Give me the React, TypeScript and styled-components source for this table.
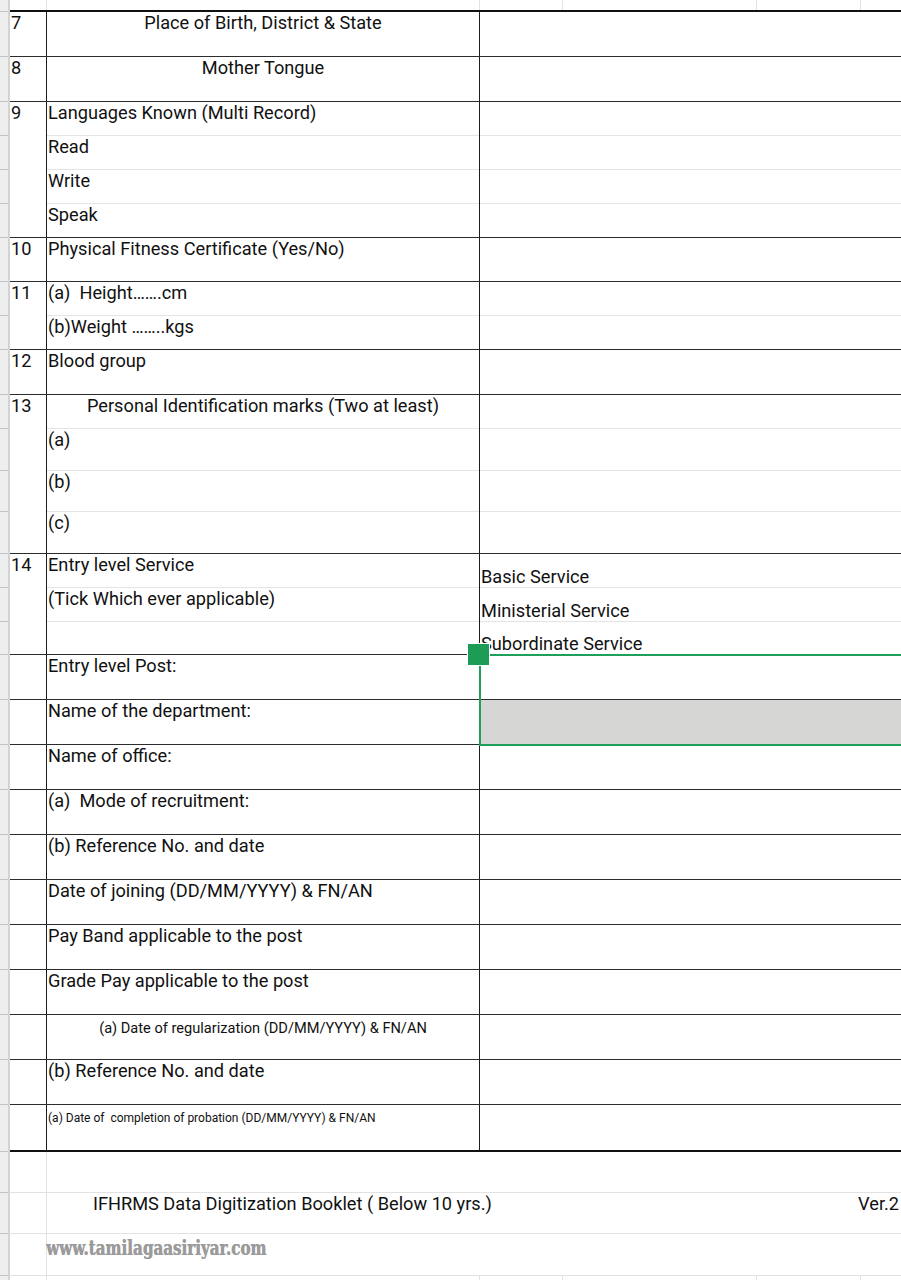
import React from 'react';
import styled, { createGlobalStyle } from 'styled-components';

const GlobalStyle = createGlobalStyle`
  html, body { margin: 0; padding: 0; background: #ffffff; }
  body { font-family: Roboto, "Noto Sans", Arial, sans-serif; color: #111111; }
  *, *::before, *::after { box-sizing: border-box; }
`;

type Rule = 'dark' | 'thick' | 'light' | 'none';
type Line = 'dark' | 'light' | 'none';

const ruleCss: Record<Rule, string> = {
  dark: '1px solid #2c2c2c',
  thick: '2px solid #111111',
  light: '1px solid #e2e2e2',
  none: 'none',
};
const ruleWidth: Record<Rule, number> = { dark: 1, thick: 2, light: 1, none: 0 };
const lineCss: Record<Line, string> = {
  dark: '1px solid #1c1c1c',
  light: '1px solid #e2e2e2',
  none: '1px solid transparent',
};

const Sheet = styled.div`
  width: 901px;
  height: 1280px;
  overflow: hidden;
  display: flex;
  flex-direction: column;
  background: #ffffff;
`;

const Block = styled.div`
  display: flex;
  flex: none;
`;

const GutterCol = styled.div`
  width: 10px;
  flex: none;
  display: flex;
  flex-direction: column;
  background: #eeeeee;
  border-right: 2px solid #d3d3d3;
`;

const GutterCell = styled.div<{ $h: number }>`
  height: ${(p) => p.$h}px;
  border-bottom: 1px solid #c2c2c2;
`;

const Body = styled.div<{ $rule: Rule }>`
  flex: 1;
  display: flex;
  border-bottom: ${(p) => ruleCss[p.$rule]};
`;

const NumCell = styled.div<{ $line: Line }>`
  width: 37px;
  flex: none;
  border-right: ${(p) => lineCss[p.$line]};
  font-size: 18.2px;
  line-height: 21px;
  padding-left: 1px;
  white-space: nowrap;
`;

const ColB = styled.div<{ $line: Line }>`
  width: 433px;
  flex: none;
  display: flex;
  flex-direction: column;
  border-right: ${(p) => lineCss[p.$line]};
`;

const ColC = styled.div`
  flex: 1;
  display: flex;
  flex-direction: column;
  min-width: 0;
`;

const Cell = styled.div<{
  $h: number;
  $last: boolean;
  $align?: 'left' | 'center' | 'right';
  $bottom?: boolean;
  $size?: number;
  $pt?: number;
  $fill?: string;
}>`
  height: ${(p) => p.$h}px;
  border-bottom: ${(p) => (p.$last ? 'none' : '1px solid #e4e4e4')};
  display: flex;
  flex-direction: column;
  justify-content: ${(p) => (p.$bottom ? 'flex-end' : 'flex-start')};
  text-align: ${(p) => p.$align ?? 'left'};
  font-size: ${(p) => p.$size ?? 18.2}px;
  line-height: normal;
  padding: ${(p) => p.$pt ?? 0}px 1px 0 1px;
  white-space: pre;
  background: ${(p) => p.$fill ?? 'transparent'};
`;

const GridStrip = styled.div<{ $h: number }>`
  height: ${(p) => p.$h}px;
  display: flex;
`;

const GridCol = styled.div<{ $w?: number }>`
  flex: ${(p) => (p.$w ? `0 0 ${p.$w}px` : '1')};
  border-right: ${(p) => (p.$w ? '1px solid #e2e2e2' : 'none')};
`;

const FooterTitle = styled.div`
  font-size: 18.2px;
  line-height: normal;
  padding-left: 46px;
  white-space: nowrap;
`;

const Version = styled.div`
  font-size: 18.2px;
  line-height: normal;
  text-align: right;
  padding-right: 2px;
  white-space: nowrap;
`;

const Watermark = styled.div`
  font-family: "DejaVu Serif Condensed", "DejaVu Serif", serif;
  font-stretch: condensed;
  font-weight: 900;
  font-size: 21px;
  line-height: 22px;
  padding-top: 3px;
  margin-left: -1px;
  color: #9b9b9b;
  white-space: nowrap;
  transform: scaleX(0.8);
  transform-origin: left center;
  text-shadow: 0.6px 0 0 #9b9b9b;
`;

const SelectionGroup = styled.div`
  position: relative;
  display: flex;
  flex-direction: column;
`;

const SelectionBox = styled.div`
  position: absolute;
  left: 479px;
  right: -4px;
  top: -1px;
  bottom: -1px;
  border: 2px solid #1fa05a;
  pointer-events: none;
`;

const Handle = styled.div`
  position: absolute;
  left: 468px;
  top: -11px;
  width: 21px;
  height: 21px;
  background: #1c9c55;
  box-shadow: 0 0 0 1px #ffffff;
`;

type Sub = {
  h: number;
  b?: string;
  c?: string;
  center?: boolean;
  size?: number;
  pt?: number;
  cBottom?: boolean;
  cFill?: string;
};

type Entry = { num?: string; subs: Sub[]; rule?: Rule };

const Row: React.FC<{ entry: Entry }> = ({ entry }) => {
  const rule = entry.rule ?? 'dark';
  const subs = entry.subs;
  return (
    <Block>
      <GutterCol>
        {subs.map((s, i) => (
          <GutterCell key={i} $h={s.h + (i === subs.length - 1 ? ruleWidth[rule] : 0)} />
        ))}
      </GutterCol>
      <Body $rule={rule}>
        <NumCell $line="dark">{entry.num}</NumCell>
        <ColB $line="dark">
          {subs.map((s, i) => (
            <Cell
              key={i}
              $h={s.h}
              $last={i === subs.length - 1}
              $align={s.center ? 'center' : 'left'}
              $size={s.size}
              $pt={s.pt}
            >
              {s.b ?? ''}
            </Cell>
          ))}
        </ColB>
        <ColC>
          {subs.map((s, i) => (
            <Cell key={i} $h={s.h} $last={i === subs.length - 1} $bottom={s.cBottom} $fill={s.cFill}>
              {s.c ?? ''}
            </Cell>
          ))}
        </ColC>
      </Body>
    </Block>
  );
};

const upper: Entry[] = [
  { num: '7', subs: [{ h: 44, b: 'Place of Birth, District & State', center: true }] },
  { num: '8', subs: [{ h: 44, b: 'Mother Tongue', center: true }] },
  {
    num: '9',
    subs: [
      { h: 34, b: 'Languages Known (Multi Record)' },
      { h: 34, b: 'Read' },
      { h: 34, b: 'Write' },
      { h: 33, b: 'Speak' },
    ],
  },
  { num: '10', subs: [{ h: 43, b: 'Physical Fitness Certificate (Yes/No)' }] },
  {
    num: '11',
    subs: [
      { h: 34, b: '(a)  Height…….cm' },
      { h: 33, b: '(b)Weight ……..kgs' },
    ],
  },
  { num: '12', subs: [{ h: 44, b: 'Blood group' }] },
  {
    num: '13',
    subs: [
      { h: 34, b: 'Personal Identification marks (Two at least)', center: true },
      { h: 42, b: '(a)' },
      { h: 41, b: '(b)' },
      { h: 41, b: '(c)' },
    ],
  },
  {
    num: '14',
    subs: [
      { h: 34, b: 'Entry level Service', c: 'Basic Service', cBottom: true },
      { h: 34, b: '(Tick Which ever applicable)', c: 'Ministerial Service', cBottom: true },
      { h: 32, c: 'Subordinate Service', cBottom: true },
    ],
  },
];

const selected: Entry[] = [
  { subs: [{ h: 44, b: 'Entry level Post:' }] },
  { subs: [{ h: 44, b: 'Name of the department:', cFill: '#d6d7d5' }] },
];

const lower: Entry[] = [
  { subs: [{ h: 44, b: 'Name of office:' }] },
  { subs: [{ h: 44, b: '(a)  Mode of recruitment:' }] },
  { subs: [{ h: 44, b: '(b) Reference No. and date' }] },
  { subs: [{ h: 44, b: 'Date of joining (DD/MM/YYYY) & FN/AN' }] },
  { subs: [{ h: 44, b: 'Pay Band applicable to the post' }] },
  { subs: [{ h: 44, b: 'Grade Pay applicable to the post' }] },
  {
    subs: [
      { h: 44, b: '(a) Date of regularization (DD/MM/YYYY) & FN/AN', center: true, size: 14.6, pt: 4 },
    ],
  },
  { subs: [{ h: 44, b: '(b) Reference No. and date' }] },
  {
    rule: 'thick',
    subs: [{ h: 45, b: '(a) Date of  completion of probation (DD/MM/YYYY) & FN/AN', size: 12, pt: 6 }],
  },
];

const App: React.FC = () => (
  <>
    <GlobalStyle />
    <Sheet>
      {/* top partial row */}
      <Block>
        <GutterCol>
          <GutterCell $h={12} />
        </GutterCol>
        <Body $rule="thick">
          <NumCell $line="light" />
          <ColB $line="light" />
          <ColC>
            <GridStrip $h={10}>
              <GridCol $w={83} />
              <GridCol $w={194} />
              <GridCol $w={104} />
              <GridCol />
            </GridStrip>
          </ColC>
        </Body>
      </Block>

      {upper.map((e, i) => (
        <Row key={`u${i}`} entry={e} />
      ))}

      <SelectionGroup>
        {selected.map((e, i) => (
          <Row key={`s${i}`} entry={e} />
        ))}
        <SelectionBox />
        <Handle />
      </SelectionGroup>

      {lower.map((e, i) => (
        <Row key={`l${i}`} entry={e} />
      ))}

      {/* footer rows */}
      <Block>
        <GutterCol>
          <GutterCell $h={41} />
        </GutterCol>
        <Body $rule="light">
          <NumCell $line="light" />
          <ColB $line="none" />
          <ColC />
        </Body>
      </Block>
      <Block>
        <GutterCol>
          <GutterCell $h={41} />
        </GutterCol>
        <Body $rule="light">
          <NumCell $line="light" />
          <ColB $line="none">
            <FooterTitle>IFHRMS Data Digitization Booklet ( Below 10 yrs.)</FooterTitle>
          </ColB>
          <ColC>
            <Version>Ver.2</Version>
          </ColC>
        </Body>
      </Block>
      <Block>
        <GutterCol>
          <GutterCell $h={42} />
        </GutterCol>
        <Body $rule="light">
          <NumCell $line="light" />
          <ColB $line="none">
            <Watermark>www.tamilagaasiriyar.com</Watermark>
          </ColB>
          <ColC />
        </Body>
      </Block>
      <Block>
        <GutterCol>
          <GutterCell $h={30} />
        </GutterCol>
        <Body $rule="none">
          <NumCell $line="light" />
          <ColB $line="light" />
          <ColC>
            <GridStrip $h={30}>
              <GridCol $w={83} />
              <GridCol $w={194} />
              <GridCol $w={104} />
              <GridCol />
            </GridStrip>
          </ColC>
        </Body>
      </Block>
    </Sheet>
  </>
);

export default App;
